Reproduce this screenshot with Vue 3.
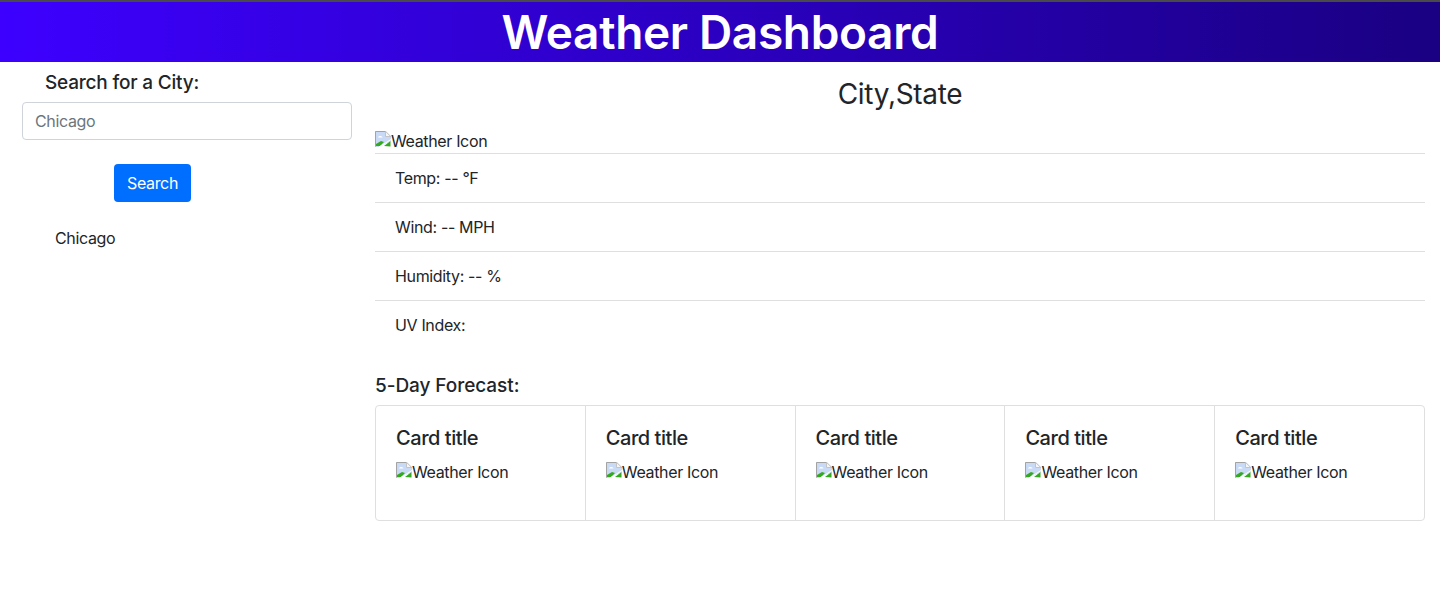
<script setup>
const stats = ['Temp: -- °F', 'Wind: -- MPH', 'Humidity: -- %', 'UV Index:']
const days = [1, 2, 3, 4, 5]
</script>

<template>
    <div class="page">
        <header class="banner">
            <h1>Weather Dashboard</h1>
        </header>
        <div class="columns">
            <aside class="sidebar">
                <h2 class="search-title">Search for a City:</h2>
                <input class="search-input" type="text" placeholder="Chicago" />
                <button class="search-btn">Search</button>
                <div class="history">Chicago</div>
            </aside>
            <main class="content">
                <h2 class="city">City,State</h2>
                <div class="icon-line">
                    <svg class="broken" width="16" height="16" viewBox="0 0 16 16">
                        <path d="M0 0H11L16 5V10L4 16H0Z" fill="#c9daf6" />
                        <path d="M.5 15.500V.5H10.500L15.500 5.500" fill="none" stroke="#a3a3a3" />
                        <path d="M10.500 .5V5.500H15.500" fill="#f6f6f6" stroke="#c4c4c4" />
                        <path d="M3 6.500C3.500 4.500 7 4.500 7.500 6.500Z" fill="#fff" />
                        <path d="M1 15V13L6 10L9 11L5 15Z" fill="#35a821" />
                        <path d="M9 15L15.500 10V15.500Z" fill="#35a821" />
                        <path d="M4 16L16 8.500" stroke="#fff" />
                    </svg>Weather Icon
                </div>
                <ul class="stats">
                    <li v-for="stat in stats" :key="stat">{{ stat }}</li>
                </ul>
                <h3 class="forecast-title">5-Day Forecast:</h3>
                <div class="cards">
                    <div v-for="day in days" :key="day" class="card">
                        <h4>Card title</h4>
                        <div class="card-icon">
                            <svg class="broken" width="16" height="16" viewBox="0 0 16 16">
                                <path d="M0 0H11L16 5V10L4 16H0Z" fill="#c9daf6" />
                                <path d="M.5 15.500V.5H10.500L15.500 5.500" fill="none" stroke="#a3a3a3" />
                                <path d="M10.500 .5V5.500H15.500" fill="#f6f6f6" stroke="#c4c4c4" />
                                <path d="M3 6.500C3.500 4.500 7 4.500 7.500 6.500Z" fill="#fff" />
                                <path d="M1 15V13L6 10L9 11L5 15Z" fill="#35a821" />
                                <path d="M9 15L15.500 10V15.500Z" fill="#35a821" />
                                <path d="M4 16L16 8.500" stroke="#fff" />
                            </svg>Weather Icon
                        </div>
                    </div>
                </div>
            </main>
        </div>
    </div>
</template>

<style>
    body {
        background: #fff;
    }
</style>

<style scoped>
    .page {
        font-family: Inter, "Liberation Sans", sans-serif;
        font-size: 16px;
        line-height: 24px;
        letter-spacing: -0.35px;
        color: #212529;
    }
    .banner {
        height: 62px;
        box-sizing: border-box;
        border-top: 2px solid #4a4a4a;
        background-image: linear-gradient(90deg, #3d00ff 0%, #1a0082 100%);
        text-align: center;
    }
    .banner h1 {
        margin: 0;
        font-size: 46px;
        line-height: 60px;
        font-weight: 600;
        letter-spacing: -0.35px;
        color: #fff;
    }
    .columns {
        display: flex;
        padding: 0 15px 0 22px;
        gap: 23px;
    }
    .sidebar {
        width: 330px;
        flex: none;
    }
    .search-title {
        margin: 9px 0 7px 23px;
        font-size: 19px;
        line-height: 24px;
        font-weight: 500;
        letter-spacing: -0.2px;
    }
    .search-input {
        display: block;
        box-sizing: border-box;
        width: 100%;
        height: 38px;
        padding: 6px 12px;
        border: 1px solid #ced4da;
        border-radius: 4px;
        font: inherit;
        letter-spacing: inherit;
    }
    .search-input::placeholder {
        color: #6c757d;
    }
    .search-btn {
        display: block;
        margin: 24px 0 0 92px;
        width: 77px;
        height: 38px;
        padding: 0;
        border: none;
        border-radius: 4px;
        background: #006eff;
        color: #fff;
        font: inherit;
        letter-spacing: inherit;
    }
    .history {
        margin: 24px 0 0 33px;
    }
    .content {
        flex: 1;
        min-width: 0;
    }
    .city {
        margin: 15px 0 20px;
        font-size: 28px;
        line-height: 34px;
        font-weight: 400;
        letter-spacing: -0.3px;
        text-align: center;
    }
    .icon-line {
        height: 22px;
        line-height: 21px;
        white-space: nowrap;
    }
    .stats {
        margin: 0;
        padding: 0;
        list-style: none;
    }
    .stats li {
        height: 49px;
        box-sizing: border-box;
        padding: 12px 20px;
        border-top: 1px solid #dfdfdf;
    }
    .forecast-title {
        margin: 25px 0 7px;
        font-size: 19px;
        line-height: 24px;
        font-weight: 500;
        letter-spacing: -0.06px;
    }
    .cards {
        display: flex;
        height: 116px;
        box-sizing: border-box;
        border: 1px solid #dfdfdf;
        border-radius: 4px;
    }
    .card {
        flex: 1;
        padding: 20px;
        border-left: 1px solid #dfdfdf;
    }
    .card:first-child {
        border-left: none;
    }
    .card h4 {
        margin: 0 0 10px;
        font-size: 20px;
        line-height: 24px;
        font-weight: 500;
        letter-spacing: -0.45px;
    }
    .card-icon {
        white-space: nowrap;
    }
</style>
